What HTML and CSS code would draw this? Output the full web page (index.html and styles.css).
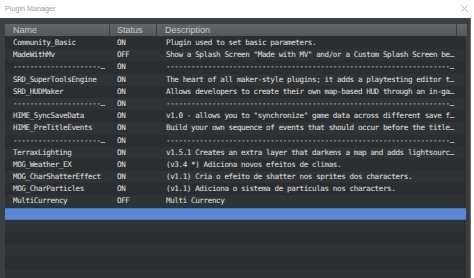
FILE: index.html
```html
<!DOCTYPE html>
<html lang="en">
<head>
    <meta charset="UTF-8">
    <title>Plugin Manager</title>
    <link rel="stylesheet" href="styles.css">
</head>
<body>
<div class="titlebar">
    <span class="title">Plugin Manager</span>
    <svg class="close" width="7" height="7" viewBox="0 0 7 7">
        <path d="M0.5 0.5L6.5 6.5M6.5 0.5L0.5 6.5" stroke="#b4b4b4" stroke-width="1" fill="none"/>
    </svg>
</div>
<div class="panel">
    <div class="list">
        <div class="head">
            <span>Name</span>
            <span>Status</span>
            <span>Description</span>
            <span></span>
        </div>
        <div class="row"><span>Community_Basic</span><span>ON</span><span>Plugin used to set basic parameters.</span><span></span></div>
        <div class="row"><span>MadeWithMv</span><span>OFF</span><span>Show a Splash Screen "Made with MV" and/or a Custom Splash Screen be…</span><span></span></div>
        <div class="row"><span>---------------------…</span><span>ON</span><span>--------------------------------------------------------------------…</span><span></span></div>
        <div class="row"><span>SRD_SuperToolsEngine</span><span>ON</span><span>The heart of all maker-style plugins; it adds a playtesting editor t…</span><span></span></div>
        <div class="row"><span>SRD_HUDMaker</span><span>ON</span><span>Allows developers to create their own map-based HUD through an in-ga…</span><span></span></div>
        <div class="row"><span>---------------------…</span><span>ON</span><span>--------------------------------------------------------------------…</span><span></span></div>
        <div class="row"><span>HIME_SyncSaveData</span><span>ON</span><span>v1.0 - allows you to "synchronize" game data across different save f…</span><span></span></div>
        <div class="row"><span>HIME_PreTitleEvents</span><span>ON</span><span>Build your own sequence of events that should occur before the title…</span><span></span></div>
        <div class="row"><span>---------------------…</span><span>ON</span><span>--------------------------------------------------------------------…</span><span></span></div>
        <div class="row"><span>TerraxLighting</span><span>ON</span><span>v1.5.1 Creates an extra layer that darkens a map and adds lightsourc…</span><span></span></div>
        <div class="row"><span>MOG_Weather_EX</span><span>ON</span><span>(v3.4 *) Adiciona novos efeitos de climas.</span><span></span></div>
        <div class="row"><span>MOG_CharShatterEffect</span><span>ON</span><span>(v1.1) Cria o efeito de shatter nos sprites dos characters.</span><span></span></div>
        <div class="row"><span>MOG_CharParticles</span><span>ON</span><span>(v1.1) Adiciona o sistema de partículas nos characters.</span><span></span></div>
        <div class="row"><span>MultiCurrency</span><span>OFF</span><span>Multi Currency</span><span></span></div>
        <div class="row sel"><span></span><span></span><span></span><span></span></div>
        <div class="row"><span></span><span></span><span></span><span></span></div>
        <div class="row"><span></span><span></span><span></span><span></span></div>
        <div class="row"><span></span><span></span><span></span><span></span></div>
        <div class="row"><span></span><span></span><span></span><span></span></div>
        <div class="row"><span></span><span></span><span></span><span></span></div>
    </div>
</div>
</body>
</html>
```

FILE: styles.css
```css
html,body,div,span{
    margin: 0;
    padding: 0;
}
body{
    width: 474px;
    height: 278px;
    overflow: hidden;
    background-color: #fff;
}
.titlebar{
    height: 18px;
    display: flex;
    align-items: center;
    justify-content: space-between;
    padding: 0 6px 2px 5px;
    box-sizing: border-box;
}
.title{
    font-family: "Liberation Sans", Arial, sans-serif;
    font-size: 7.2px;
    color: #9a9a9a;
}
.panel{
    width: 471px;
    height: 260px;
    box-sizing: border-box;
    padding: 6px 4px 0 5px;
    background-color: #3d4043;
    border-right: 1px solid #6a6d70;
    overflow: hidden;
}
.head,.row{
    display: grid;
    grid-template-columns: 105px 47px 300px 10px;
}
.head{
    height: 12px;
    border-bottom: 1px solid #2a2c2e;
}
.head span{
    background: linear-gradient(#62666a, #54585b);
    border-right: 1px solid #3a3d40;
    font-family: "Liberation Sans", Arial, sans-serif;
    font-size: 9px;
    line-height: 12px;
    color: #c9cbcd;
    padding-left: 7px;
}
.head span:first-child{
    padding-left: 8px;
}
.head span:nth-child(3){
    padding-left: 8px;
}
.head span:last-child{
    border-right: none;
    padding-left: 0;
}
.row{
    height: 12.2px;
    background-color: #2b2e31;
}
.row:nth-child(odd){
    background-color: #303336;
}
.row span{
    font-family: "DejaVu Sans Mono", "Liberation Mono", monospace;
    font-size: 7.6px;
    letter-spacing: -0.4px;
    line-height: 12.2px;
    color: #e4e4e4;
    white-space: nowrap;
    overflow: hidden;
    padding: 0 0 0 8px;
}
.row span:nth-child(2){
    padding-left: 7px;
}
.row span:nth-child(3){
    padding-left: 9px;
}
.row span:last-child{
    padding: 0;
}
.row.sel{
    background-color: #5b87d4;
    box-shadow: inset 0 1px 0 #4a72b8, inset 0 -1px 0 #4a72b8;
}
```
